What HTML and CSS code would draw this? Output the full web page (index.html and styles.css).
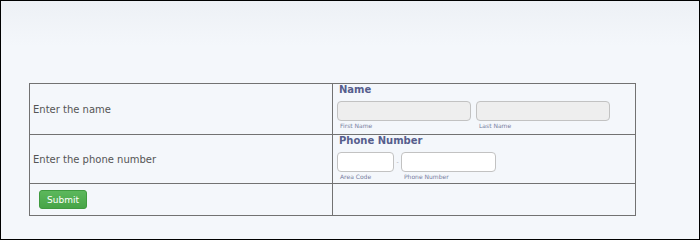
FILE: index.html
```html
<!DOCTYPE html>
<html lang="en">
<head>
    <meta charset="UTF-8">
    <meta name="viewport" content="width=device-width, initial-scale=1.0">
    <title>Contact Form</title>
    <link rel="stylesheet" href="styles.css">
</head>
<body>
    <div class="page">
        <form class="contact-form">
            <table class="form-table">
                <colgroup>
                    <col class="col-prompt">
                    <col class="col-field">
                </colgroup>
                <tr class="row-name">
                    <td class="prompt">Enter the name</td>
                    <td class="field-cell">
                        <div class="field-title">Name</div>
                        <div class="field-group">
                            <div class="field">
                                <input type="text" class="input input-wide input-grey">
                                <span class="sub-label">First Name</span>
                            </div>
                            <div class="field">
                                <input type="text" class="input input-wide input-grey">
                                <span class="sub-label">Last Name</span>
                            </div>
                        </div>
                    </td>
                </tr>
                <tr class="row-phone">
                    <td class="prompt">Enter the phone number</td>
                    <td class="field-cell">
                        <div class="field-title">Phone Number</div>
                        <div class="field-group field-group-phone">
                            <div class="field">
                                <input type="text" class="input input-area">
                                <span class="sub-label">Area Code</span>
                            </div>
                            <span class="dash">-</span>
                            <div class="field">
                                <input type="text" class="input input-phone">
                                <span class="sub-label">Phone Number</span>
                            </div>
                        </div>
                    </td>
                </tr>
                <tr class="row-submit">
                    <td class="prompt submit-cell">
                        <button type="button" class="submit-button">Submit</button>
                    </td>
                    <td></td>
                </tr>
            </table>
        </form>
    </div>
</body>
</html>
```

FILE: styles.css
```css
body {
    margin: 0;
    padding: 0;
    font-family: 'DejaVu Sans', sans-serif;
    color: #555;
}
.page {
    height: 240px;
    box-sizing: border-box;
    border: 1px solid #000;
    padding: 82px 0 0 28px;
    background: linear-gradient(#edf0f5, #f4f7fb 45px);
}
.contact-form {
    margin: 0;
}
.form-table {
    width: 607px;
    border-collapse: collapse;
    table-layout: fixed;
}
.col-prompt {
    width: 303px;
}
.form-table td {
    border: 1px solid #727272;
    padding: 0;
}
.prompt {
    font-size: 10px;
    padding-left: 3px !important;
    vertical-align: middle;
}
.field-cell {
    padding: 0 4px 4px 4px !important;
    vertical-align: top;
}
.row-phone .field-cell {
    padding-bottom: 2px !important;
}
.field-title {
    font-size: 10px;
    line-height: 12px;
    font-weight: bold;
    color: #565e8d;
    padding-left: 2px;
}
.field-group {
    display: flex;
    gap: 5px;
    margin-top: 5px;
}
.field-group-phone {
    gap: 0;
}
.field {
    display: flex;
    flex-direction: column;
}
.input {
    box-sizing: border-box;
    height: 20px;
    margin: 0;
    border: 1px solid #c2c2c2;
    border-radius: 4px;
    background: #fff;
}
.input-grey {
    background: #eeeeee;
}
.input-wide {
    width: 134px;
}
.input-area {
    width: 57px;
}
.input-phone {
    width: 95px;
}
.dash {
    width: 7px;
    text-align: center;
    font-size: 6px;
    line-height: 20px;
    color: #aaa;
}
.sub-label {
    font-size: 6px;
    line-height: 8px;
    margin: 1px 0 0 3px;
    color: #777d9e;
}
.row-submit td {
    height: 31px;
}
.submit-cell {
    padding-left: 9px !important;
}
.submit-button {
    display: block;
    width: 48px;
    height: 19px;
    padding: 0;
    border: 1px solid #3f9a3f;
    border-radius: 3px;
    background: linear-gradient(#5cb85c, #47a447);
    color: #fff;
    font-family: 'DejaVu Sans', sans-serif;
    font-size: 9px;
}
```
